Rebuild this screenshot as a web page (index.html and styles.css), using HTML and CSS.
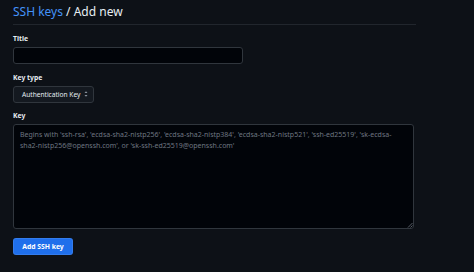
FILE: index.html
```
<!DOCTYPE html>
<html lang="en">
<head>
<meta charset="utf-8">
<title>SSH keys / Add new</title>
<link rel="stylesheet" href="styles.css">
</head>
<body>
<main class="page">
  <header class="subhead">
    <h2 class="subhead-title"><a class="crumb" href="#">SSH keys</a> / Add new</h2>
  </header>
  <form class="form">
    <div class="field">
      <label class="label" for="title">Title</label>
      <input class="input title-input" id="title" type="text">
    </div>
    <div class="field">
      <label class="label" for="type">Key type</label>
      <div class="select">
        <span class="select-text">Authentication Key</span>
        <svg class="select-caret" viewBox="0 0 6 10" width="4" height="6" aria-hidden="true"><path d="M3 0.5 L5.5 3.5 H0.5 Z M3 9.5 L5.5 6.5 H0.5 Z" fill="#8b949e"/></svg>
      </div>
    </div>
    <div class="field">
      <label class="label" for="key">Key</label>
      <div class="textarea" id="key">
        <p class="placeholder">Begins with 'ssh-rsa', 'ecdsa-sha2-nistp256', 'ecdsa-sha2-nistp384', 'ecdsa-sha2-nistp521', 'ssh-ed25519', 'sk-ecdsa-sha2-nistp256@openssh.com', or 'sk-ssh-ed25519@openssh.com'</p>
        <svg class="grip" viewBox="0 0 6 6" width="6" height="6" aria-hidden="true"><path d="M5.5 1 L1 5.5 M5.5 3.5 L3.5 5.5" stroke="#6e7681" stroke-width="0.8"/></svg>
      </div>
    </div>
    <button class="btn" type="button">Add SSH key</button>
  </form>
</main>
</body>
</html>
```
FILE: styles.css
```
html, body {
  margin: 0;
  padding: 0;
  background: #0d1117;
  height: 100%;
}
body {
  font-family: "Noto Sans", "Open Sans", "Liberation Sans", sans-serif;
  color: #e6edf3;
}
.page {
  padding: 3px 0 0 13px;
  width: 403px;
}
.subhead {
  border-bottom: 1px solid #21262d;
  padding-bottom: 4px;
}
.subhead-title {
  margin: 0;
  font-size: 12px;
  font-weight: 400;
  line-height: 17px;
  color: #e6edf3;
}
.crumb {
  color: #4493f8;
  text-decoration: none;
}
.form {
  display: flex;
  flex-direction: column;
  align-items: flex-start;
  padding-top: 9px;
}
.field {
  display: flex;
  flex-direction: column;
  align-items: flex-start;
  gap: 3px;
  margin-bottom: 8.5px;
}
.label {
  font-size: 6.8px;
  font-weight: 700;
  line-height: 10px;
  color: #e6edf3;
}
.input {
  box-sizing: border-box;
  width: 230px;
  height: 17px;
  background: #010409;
  border: 1px solid #30363d;
  border-radius: 3px;
  outline: none;
  margin: 0;
}
.select {
  box-sizing: border-box;
  height: 17px;
  width: 81px;
  display: flex;
  align-items: center;
  justify-content: space-between;
  padding: 0 5px 0 8px;
  background: #141920;
  border: 1px solid #30363d;
  border-radius: 3px;
}
.select-text {
  font-size: 6.6px;
  color: #e6edf3;
}
.textarea {
  position: relative;
  box-sizing: border-box;
  width: 401px;
  height: 105px;
  background: #010409;
  border: 1px solid #30363d;
  border-radius: 3px;
  padding: 4px 6px;
}
.placeholder {
  margin: 0;
  font-size: 7px;
  line-height: 11px;
  color: #6e7681;
}
.grip {
  position: absolute;
  right: 0;
  bottom: 0;
}
.btn {
  box-sizing: border-box;
  width: 60px;
  height: 17px;
  border: 1px solid rgba(240, 246, 252, 0.1);
  border-radius: 3px;
  background: #1f6feb;
  color: #ffffff;
  font-family: inherit;
  font-size: 6.8px;
  font-weight: 700;
  padding: 0;
}
```
